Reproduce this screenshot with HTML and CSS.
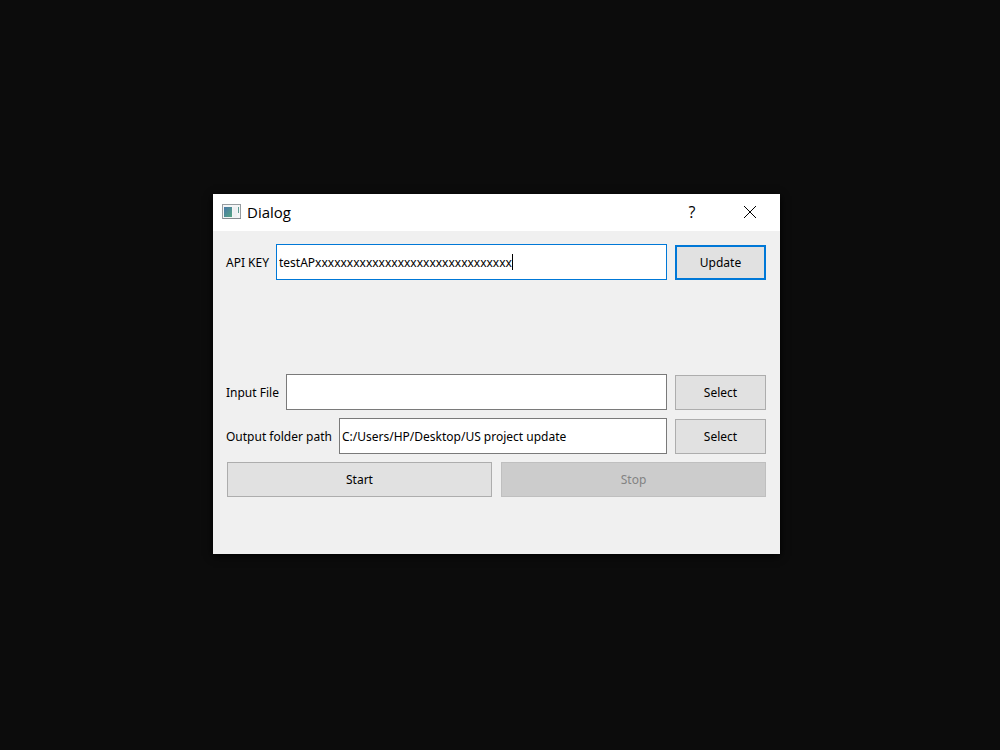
FILE: index.html
```html
<!DOCTYPE html>
<html lang="en">
<head>
    <meta charset="UTF-8">
    <meta name="viewport" content="width=device-width, initial-scale=1.0">
    <title>Dialog</title>
    <link rel="stylesheet" href="styles.css">
</head>
<body>
    <div class="dialog">
        <!-- Title bar -->
        <header class="title-bar">
            <svg class="app-icon" width="20" height="16" viewBox="0 0 20 16">
                <defs>
                    <linearGradient id="pane" x1="0" y1="0" x2="1" y2="1">
                        <stop offset="0" stop-color="#4a78a8"/>
                        <stop offset="1" stop-color="#55a583"/>
                    </linearGradient>
                </defs>
                <rect x="0.5" y="0.5" width="18" height="14" fill="#f4f5f6" stroke="#979da1"/>
                <rect x="1" y="14" width="18" height="1" fill="#858b8f"/>
                <rect x="2" y="3" width="8" height="10" fill="url(#pane)"/>
                <rect x="11" y="3" width="4" height="10" fill="#eef0f2"/>
                <rect x="16" y="3" width="1" height="6" fill="#5f9c94"/>
            </svg>
            <h1>Dialog</h1>
            <button class="title-btn" type="button" aria-label="Help">?</button>
            <button class="title-btn" type="button" aria-label="Close">
                <svg width="12" height="12" viewBox="0 0 12 12">
                    <path d="M0 0L12 12M12 0L0 12" stroke="#000" fill="none"/>
                </svg>
            </button>
        </header>

        <form class="content">
            <!-- API key -->
            <div class="row key-row">
                <label for="apiKey">API KEY</label>
                <div class="field">
                    <input class="active" type="text" id="apiKey" value="testAPxxxxxxxxxxxxxxxxxxxxxxxxxxxxxxx">
                    <span class="caret"></span>
                </div>
                <button class="btn default-btn" type="button">Update</button>
            </div>

            <!-- Paths -->
            <div class="row">
                <label for="inputFile">Input File</label>
                <div class="field">
                    <input type="text" id="inputFile">
                </div>
                <button class="btn" type="button">Select</button>
            </div>
            <div class="row">
                <label for="outputPath">Output folder path</label>
                <div class="field">
                    <input type="text" id="outputPath" value="C:/Users/HP/Desktop/US project update">
                </div>
                <button class="btn" type="button">Select</button>
            </div>

            <!-- Run controls -->
            <div class="actions">
                <button class="btn" type="button">Start</button>
                <button class="btn" type="button" disabled>Stop</button>
            </div>
        </form>
    </div>
</body>
</html>
```
FILE: styles.css
```css
* {
    box-sizing: border-box;
}

body {
    margin: 0;
    min-height: 100vh;
    padding: 0 7px 2px 0;
    display: flex;
    align-items: center;
    justify-content: center;
    background: #0c0c0c;
    color: #000;
    font-family: "Noto Sans", Tahoma, sans-serif;
    font-size: 12px;
}

.dialog {
    width: 100%;
    max-width: 567px;
    background: #f0f0f0;
    box-shadow: 0 2px 8px #000;
}

.title-bar {
    display: flex;
    align-items: center;
    height: 37px;
    padding: 0 1px 2px 9px;
    background: #fff;
}

h1 {
    flex: 1;
    margin: 0 0 0 5px;
    font-family: "Open Sans", "Segoe UI", sans-serif;
    font-size: 15px;
    font-weight: 400;
}

.title-btn {
    display: flex;
    align-items: center;
    justify-content: center;
    width: 58px;
    height: 35px;
    padding: 0;
    border: none;
    background: none;
    color: #000;
    font-family: "Open Sans", "Segoe UI", sans-serif;
    font-size: 16px;
}

.content {
    display: flex;
    flex-direction: column;
    gap: 8px;
    padding: 13px 14px 57px 13px;
}

.row {
    display: flex;
    align-items: center;
}

.key-row {
    margin-bottom: 86px;
}

.field {
    position: relative;
    flex: 1;
    margin: 0 8px 0 7px;
}

input {
    display: block;
    width: 100%;
    height: 36px;
    padding: 0 2px;
    border: 1px solid #7a7a7a;
    background: #fff;
    color: #000;
    font: inherit;
    outline: none;
}

input.active,
input:focus {
    border-color: #0078d7;
}

/* text cursor at the end of the key */
.caret {
    position: absolute;
    top: 10px;
    left: 236px;
    width: 1px;
    height: 16px;
    background: #000;
}

.btn {
    width: 91px;
    height: 35px;
    padding: 0;
    border: 1px solid #adadad;
    background: #e1e1e1;
    color: #000;
    font: inherit;
}

.default-btn {
    border: 2px solid #0078d7;
}

.btn:disabled {
    border-color: #bfbfbf;
    background: #ccc;
    color: #838383;
}

.actions {
    display: flex;
    gap: 9px;
    margin-left: 1px;
}

.actions .btn {
    flex: 1;
}
```
